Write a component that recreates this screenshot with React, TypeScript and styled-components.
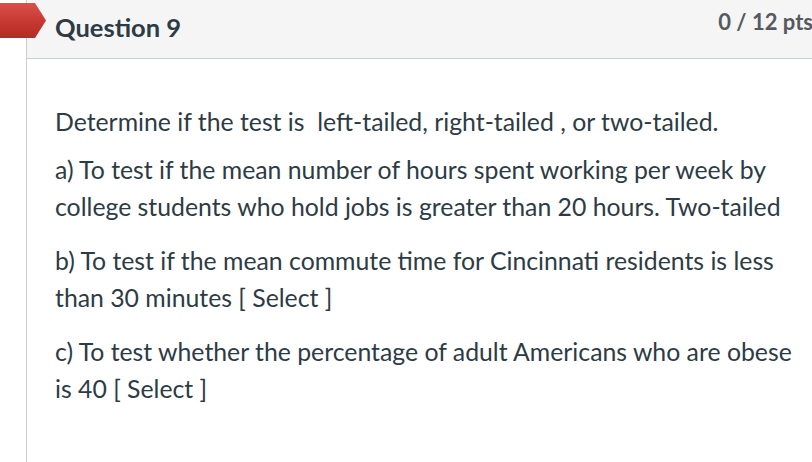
import React from 'react';
import styled, { createGlobalStyle } from 'styled-components';

const GlobalStyle = createGlobalStyle`
  html, body {
    margin: 0;
    padding: 0;
    background: #ffffff;
    overflow: hidden;
  }

  body {
    font-family: Lato, "Noto Sans", sans-serif;
    color: #2d3b45;
  }
`;

const Page = styled.div`
  width: 812px;
  height: 462px;
  position: relative;
  overflow: hidden;
`;

const Card = styled.div`
  margin-left: 26px;
  width: 786px;
  height: 462px;
  border-left: 1px solid #c7cdd1;
`;

const Header = styled.header`
  height: 59px;
  background: #f5f5f5;
  border-bottom: 1px solid #c7cdd1;
  display: flex;
  align-items: flex-start;
  justify-content: space-between;
  padding: 11px 0 0 28px;
  box-sizing: border-box;
`;

const Title = styled.h2`
  margin: 0;
  font-size: 25.5px;
  font-weight: 700;
  color: #2d3b45;
  line-height: 32px;
`;

const Points = styled.span`
  font-size: 22px;
  font-weight: 700;
  color: #555a5e;
  line-height: 30px;
  margin-top: -4px;
  white-space: nowrap;
`;

const Flag = styled.div`
  position: absolute;
  left: 0;
  top: 3px;
  width: 46px;
  height: 35px;
  background: linear-gradient(180deg, #d9514a 0%, #c4362f 60%, #b22c26 100%);
  clip-path: polygon(0 0, 35px 0, 46px 50%, 35px 100%, 0 100%);
`;

const Body = styled.div`
  padding: 44px 0 0 28px;
  font-size: 24.8px;
  line-height: 37.5px;
  white-space: nowrap;
`;

const Paragraph = styled.p<{ $gap?: number }>`
  margin: 0 0 ${p => p.$gap ?? 16}px;
`;

function App() {
  return (
    <>
      <GlobalStyle />
      <Page>
        <Flag />
        <Card>
          <Header>
            <Title>Question 9</Title>
            <Points>0 / 12 pts</Points>
          </Header>
          <Body>
            <Paragraph $gap={10}>
              Determine if the test is&nbsp; left-tailed, right-tailed , or two-tailed.
            </Paragraph>
            <Paragraph>
              a) To test if the mean number of hours spent working per week by
              <br />
              college students who hold jobs is greater than 20 hours. Two-tailed
            </Paragraph>
            <Paragraph>
              b) To test if the mean commute time for Cincinnati residents is less
              <br />
              than 30 minutes [ Select ]
            </Paragraph>
            <Paragraph>
              c) To test whether the percentage of adult Americans who are obese
              <br />
              is 40 [ Select ]
            </Paragraph>
          </Body>
        </Card>
      </Page>
    </>
  );
}

export default App;
